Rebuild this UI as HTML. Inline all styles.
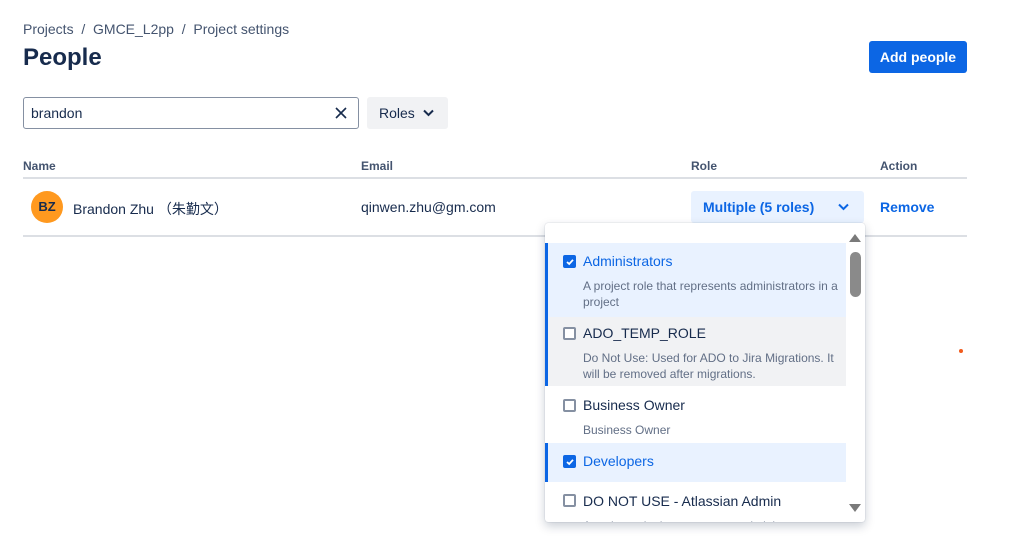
<!DOCTYPE html>
<html><head><meta charset="utf-8"><style>
*{box-sizing:border-box;margin:0;padding:0}
body{width:1025px;height:542px;overflow:hidden;background:#fff;font-family:"Liberation Sans","Noto Sans CJK SC",sans-serif;color:#172b4d;font-size:14px;position:relative}
.a{position:absolute;white-space:nowrap}
.bc{left:23px;top:21px;color:#44546f}
h1{position:absolute;left:23px;top:44px;font-size:24px;font-weight:bold;color:#172b4d}
.btn{left:869px;top:41px;width:98px;height:32px;background:#0c66e4;color:#fff;font-weight:bold;border-radius:3px;text-align:center;line-height:32px}
.inp{left:23px;top:97px;width:336px;height:32px;border:1px solid #8590a2;border-radius:3px;padding-left:7px;line-height:30px}
.roles{left:367px;top:97px;width:81px;height:32px;background:#f1f2f4;border-radius:3px;line-height:32px;padding-left:12px}
.th{top:159px;font-weight:bold;font-size:12px;color:#44546f}
.line{left:23px;width:944px;height:2px;background:#dcdfe4}
.av{left:31px;top:191px;width:32px;height:32px;border-radius:50%;background:#ff991f;color:#172b4d;font-weight:bold;text-align:center;line-height:32px;font-size:13px}
.rb{left:691px;top:191px;width:173px;height:32px;background:#e9f2ff;border-radius:3px;color:#0c66e4;font-weight:bold;line-height:32px;padding-left:12px}
.dd{left:545px;top:223px;width:320px;height:299px;background:#fff;box-shadow:0 4px 10px rgba(9,30,66,.22),0 0 1px rgba(9,30,66,.3);border-radius:3px;overflow:hidden}
.it{position:absolute;left:0;width:301px;padding-left:38px}
.it .t{position:absolute;left:38px;font-size:14px}
.it .d{position:absolute;left:38px;font-size:12px;color:#626f86;line-height:16px;white-space:normal;width:255px}
.cb{position:absolute;left:18px;width:13px;height:13px;border:2px solid #8590a2;border-radius:2px;background:#fff}
.cb.on{background:#0c66e4;border-color:#0c66e4}
.sel{background:#e9f2ff;border-left:3px solid #0c66e4}
</style></head><body>
<div class="a bc">Projects &nbsp;/&nbsp; GMCE_L2pp &nbsp;/&nbsp; Project settings</div>
<h1>People</h1>
<div class="a btn">Add people</div>
<div class="a inp">brandon<svg style="position:absolute;right:11px;top:9px" width="12" height="12" viewBox="0 0 12 12"><path d="M1 1L11 11M11 1L1 11" stroke="#172b4d" stroke-width="1.6"/></svg></div>
<div class="a roles">Roles<svg style="position:absolute;left:56px;top:12px" width="11" height="8" viewBox="0 0 11 8"><path d="M1 1.5L5.5 6L10 1.5" stroke="#172b4d" stroke-width="2" fill="none"/></svg></div>
<div class="a th" style="left:23px">Name</div>
<div class="a th" style="left:361px">Email</div>
<div class="a th" style="left:691px">Role</div>
<div class="a th" style="left:880px">Action</div>
<div class="a line" style="top:177px"></div>
<div class="a av">BZ</div>
<div class="a" style="left:73px;top:199px">Brandon Zhu （朱勤文）</div>
<div class="a" style="left:361px;top:199px">qinwen.zhu@gm.com</div>
<div class="a rb">Multiple (5 roles)<svg style="position:absolute;left:147px;top:12px" width="11" height="8" viewBox="0 0 11 8"><path d="M1 1.5L5.5 6L10 1.5" stroke="#0c66e4" stroke-width="2" fill="none"/></svg></div>
<div class="a" style="left:880px;top:199px;color:#0c66e4;font-weight:bold">Remove</div>
<div class="a line" style="top:235px"></div>
<div class="a" style="left:959px;top:349px;width:4px;height:4px;border-radius:50%;background:#f15b1d"></div>
<div class="a dd">
 <div class="it sel" style="top:20px;height:74px"><span class="cb on" style="left:15px;top:12px"></span><svg style="position:absolute;left:17px;top:14px" width="10" height="10" viewBox="0 0 10 10"><path d="M2 5L4.2 7L8 2.8" stroke="#fff" stroke-width="1.8" fill="none"/></svg><span class="t" style="left:35px;top:10px;color:#0c66e4">Administrators</span><span class="d" style="left:35px;top:35px">A project role that represents administrators in a project</span></div>
 <div class="it" style="top:94px;height:69px;background:#f1f2f4;border-left:3px solid #0c66e4"><span class="cb" style="left:15px;top:10px"></span><span class="t" style="left:35px;top:8px">ADO_TEMP_ROLE</span><span class="d" style="left:35px;top:33px">Do Not Use: Used for ADO to Jira Migrations. It will be removed after migrations.</span></div>
 <div class="it" style="top:163px;height:57px"><span class="cb" style="top:13px"></span><span class="t" style="top:11px">Business Owner</span><span class="d" style="top:36px">Business Owner</span></div>
 <div class="it sel" style="top:220px;height:39px"><span class="cb on" style="left:15px;top:12px"></span><svg style="position:absolute;left:17px;top:14px" width="10" height="10" viewBox="0 0 10 10"><path d="M2 5L4.2 7L8 2.8" stroke="#fff" stroke-width="1.8" fill="none"/></svg><span class="t" style="left:35px;top:10px;color:#0c66e4">Developers</span></div>
 <div class="it" style="top:259px;height:40px"><span class="cb" style="top:12px"></span><span class="t" style="top:11px">DO NOT USE - Atlassian Admin</span><span class="d" style="top:36px">A project role that represents administrators</span></div>
 <svg style="position:absolute;left:304px;top:10px" width="12" height="9" viewBox="0 0 12 9"><path d="M0 9L6 1L12 9Z" fill="#7a7a7a"/></svg>
 <div style="position:absolute;left:305px;top:29px;width:11px;height:45px;border-radius:6px;background:#8a8a8a"></div>
 <svg style="position:absolute;left:304px;top:281px" width="12" height="9" viewBox="0 0 12 9"><path d="M0 0L6 8L12 0Z" fill="#7a7a7a"/></svg>
</div>
</body></html>
